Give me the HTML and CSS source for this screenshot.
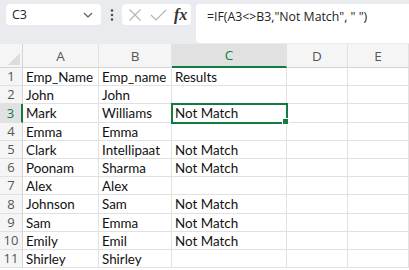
FILE: index.html
```html
<!DOCTYPE html>
<html>
<head>
<meta charset="utf-8">
<link rel="stylesheet" href="styles.css">
</head>
<body>
<div class="app">
  <div class="topbar">
    <div class="namebox">
      <span class="ref">C3</span>
      <svg class="chev" width="10" height="6" viewBox="0 0 10 6"><path d="M1 1 L5 5 L9 1" fill="none" stroke="#555" stroke-width="1.1"/></svg>
    </div>
    <div class="dots">
      <svg width="4" height="12" viewBox="0 0 4 12"><circle cx="2" cy="1.5" r="1.2" fill="#444"/><circle cx="2" cy="6" r="1.2" fill="#444"/><circle cx="2" cy="10.5" r="1.2" fill="#444"/></svg>
    </div>
    <div class="fxbox">
      <svg class="ico" width="14" height="12" viewBox="0 0 14 12"><path d="M1.5 0.5 L12.5 11.5 M12.5 0.5 L1.5 11.5" fill="none" stroke="#b3b3b3" stroke-width="1.1"/></svg>
      <svg class="ico" width="17" height="12" viewBox="0 0 17 12"><path d="M1 6 L6 11 L16 1" fill="none" stroke="#b3b3b3" stroke-width="1.1"/></svg>
      <span class="fx">fx</span>
    </div>
    <div class="formula">=IF(A3&lt;&gt;B3,"Not Match", " ")</div>
  </div>
  <div class="sheet">
    <div class="corner"><svg width="12" height="12" viewBox="0 0 12 12"><path d="M12 0 L12 12 L0 12 Z" fill="#dcdcdc"/></svg></div>
    <div class="ch">A</div>
    <div class="ch">B</div>
    <div class="ch sel">C</div>
    <div class="ch">D</div>
    <div class="ch">E</div>

    <div class="rh">1</div><div class="c">Emp_Name</div><div class="c">Emp_name</div><div class="c">Results</div><div class="c"></div><div class="c"></div>
    <div class="rh">2</div><div class="c">John</div><div class="c">John</div><div class="c"></div><div class="c"></div><div class="c"></div>
    <div class="rh rsel">3</div><div class="c">Mark</div><div class="c">Williams</div><div class="c active">Not Match<span class="handle"></span></div><div class="c"></div><div class="c"></div>
    <div class="rh">4</div><div class="c">Emma</div><div class="c">Emma</div><div class="c"></div><div class="c"></div><div class="c"></div>
    <div class="rh">5</div><div class="c">Clark</div><div class="c">Intellipaat</div><div class="c">Not Match</div><div class="c"></div><div class="c"></div>
    <div class="rh">6</div><div class="c">Poonam</div><div class="c">Sharma</div><div class="c">Not Match</div><div class="c"></div><div class="c"></div>
    <div class="rh">7</div><div class="c">Alex</div><div class="c">Alex</div><div class="c"></div><div class="c"></div><div class="c"></div>
    <div class="rh">8</div><div class="c">Johnson</div><div class="c">Sam</div><div class="c">Not Match</div><div class="c"></div><div class="c"></div>
    <div class="rh">9</div><div class="c">Sam</div><div class="c">Emma</div><div class="c">Not Match</div><div class="c"></div><div class="c"></div>
    <div class="rh">10</div><div class="c">Emily</div><div class="c">Emil</div><div class="c">Not Match</div><div class="c"></div><div class="c"></div>
    <div class="rh">11</div><div class="c">Shirley</div><div class="c">Shirley</div><div class="c"></div><div class="c"></div><div class="c"></div>
  </div>
</div>
</body>
</html>
```
FILE: styles.css
```css
html, body {
  margin: 0;
  padding: 0;
  background: #ffffff;
  overflow: hidden;
}
.app {
  width: 409px;
  height: 270px;
  font-family: "Lato", "Open Sans", sans-serif;
  overflow: hidden;
}
.topbar {
  height: 44px;
  background: #e9ebee;
  display: flex;
  align-items: flex-start;
  padding-top: 4px;
  box-sizing: border-box;
  padding-left: 6px;
}
.namebox {
  width: 95px;
  height: 21px;
  background: #fff;
  border-radius: 4px;
  display: flex;
  align-items: center;
  justify-content: space-between;
  padding: 0 8px 0 6px;
  box-sizing: border-box;
  font-family: "Open Sans", sans-serif;
  font-size: 12.5px;
  color: #222;
}
.dots {
  width: 21px;
  height: 21px;
  display: flex;
  align-items: center;
  justify-content: center;
}
.fxbox {
  width: 69px;
  height: 21px;
  background: #fff;
  border-radius: 4px;
  display: flex;
  align-items: center;
  padding-left: 6px;
  gap: 8px;
  box-sizing: border-box;
}
.fx {
  font-family: "Liberation Serif", serif;
  font-style: italic;
  font-weight: bold;
  font-size: 16px;
  color: #333;
  margin-left: -1px;
  line-height: 1;
}
.formula {
  margin-left: 5px;
  flex: 1;
  height: 39px;
  background: #fff;
  border-radius: 4px 0 0 4px;
  font-family: "Open Sans", sans-serif;
  font-size: 12.3px;
  color: #222;
  padding: 4px 0 0 11px;
  box-sizing: border-box;
}
.sheet {
  display: grid;
  grid-template-columns: 23px 76px 73px 115px 61px 61px;
  grid-template-rows: 24px repeat(11, 18.2px);
  background: #fff;
}
.corner {
  background: #f5f5f5;
  border-bottom: 1px solid #d4d4d4;
  border-right: 1px solid #d4d4d4;
  display: flex;
  align-items: flex-end;
  justify-content: flex-end;
  padding: 0 2px 2px 0;
}
.ch {
  background: #f5f5f5;
  border-bottom: 1px solid #d4d4d4;
  border-right: 1px solid #e1e1e1;
  color: #555;
  font-family: "Open Sans", sans-serif;
  font-size: 13.5px;
  display: flex;
  align-items: center;
  justify-content: center;
}
.ch.sel {
  background: #e1e1e1;
  color: #107c41;
  border-bottom: 2px solid #107c41;
}
.rh {
  background: #f5f5f5;
  border-right: 1px solid #d4d4d4;
  border-bottom: 1px solid #e1e1e1;
  color: #555;
  font-family: "Open Sans", sans-serif;
  font-size: 13px;
  display: flex;
  align-items: flex-end;
  justify-content: center;
  line-height: 17px;
}
.rh.rsel {
  background: #e1e1e1;
  color: #107c41;
  border-right: 2px solid #107c41;
}
.c {
  border-right: 1px solid #e1e1e1;
  border-bottom: 1px solid #e1e1e1;
  font-size: 13.4px;
  color: #111;
  padding-left: 3px;
  padding-top: 1px;
  line-height: 17px;
  white-space: nowrap;
  overflow: visible;
  position: relative;
}
.c.active {
  outline: 2px solid #107c41;
  outline-offset: -1px;
  z-index: 1;
}
.handle {
  position: absolute;
  right: -3px;
  bottom: -3px;
  width: 5px;
  height: 5px;
  background: #107c41;
  border: 1px solid #fff;
}
```
